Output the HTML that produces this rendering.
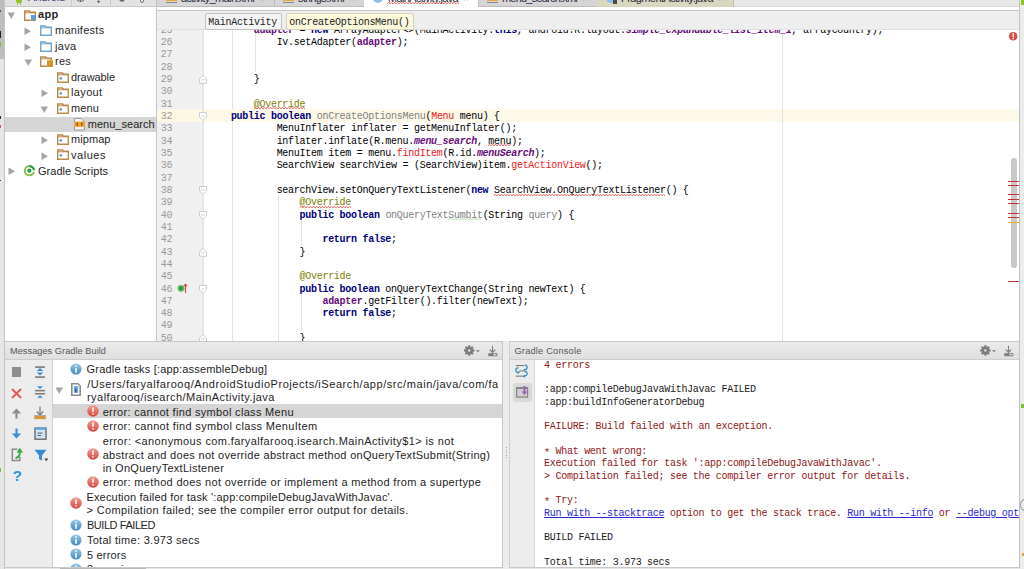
<!DOCTYPE html><html><head><meta charset="utf-8"><style>html,body{margin:0;padding:0;width:1024px;height:569px;overflow:hidden;position:relative}body{font-family:"Liberation Sans",sans-serif;-webkit-font-smoothing:antialiased}</style></head><body><div style="position:absolute;left:0px;top:0px;width:1024px;height:569px;background:#e8e8e8;"></div>
<div style="position:absolute;left:0px;top:0px;width:5px;height:59px;background:#bdbdbd;"></div>
<div style="position:absolute;left:0px;top:59px;width:5px;height:510px;background:#e6e6e6;"></div>
<div style="position:absolute;left:4px;top:0px;width:1px;height:569px;background:#c4c4c4;"></div>
<div style="position:absolute;left:0px;top:9.5px;width:1.2px;height:2px;background:#6a5030;"></div>
<div style="position:absolute;left:0px;top:31px;width:1.2px;height:6.5px;background:#202020;"></div>
<div style="position:absolute;left:0px;top:41.5px;width:1.2px;height:5.5px;background:#7cc040;"></div>
<div style="position:absolute;left:0px;top:116px;width:1.2px;height:3px;background:#303030;"></div>
<div style="position:absolute;left:0px;top:125px;width:1.2px;height:2.5px;background:#e05050;"></div>
<div style="position:absolute;left:0px;top:179.5px;width:1.2px;height:1.5px;background:#404040;"></div>
<div style="position:absolute;left:0px;top:468px;width:1.2px;height:4px;background:#7cc040;"></div>
<div style="position:absolute;left:5px;top:0px;width:151px;height:7px;background:#e2e2e2;"></div>
<div style="position:absolute;left:5px;top:6px;width:151px;height:1px;background:#c9c9c9;"></div>
<div style="position:absolute;left:5px;top:7px;width:151px;height:334px;background:#ffffff;"></div>
<div style="position:absolute;left:156px;top:0px;width:1px;height:341px;background:#c4c4c4;"></div>
<div style="position:absolute;left:16px;top:0;width:6px;height:3px;background:#8dc21f;border-radius:0 0 2px 2px"></div>
<div style="position:absolute;left:17px;top:3px;width:1px;height:2px;background:#8dc21f"></div><div style="position:absolute;left:20px;top:3px;width:1px;height:2px;background:#8dc21f"></div>
<div style="position:absolute;left:28px;top:-10.50px;font-family:'Liberation Sans', sans-serif;font-size:11px;font-weight:normal;font-style:normal;color:#3b3b6b;white-space:pre;line-height:15px;letter-spacing:-0.132px;">Android</div>
<div style="position:absolute;left:71px;top:0px;width:1px;height:6px;background:#c8c8c8;"></div>
<div style="position:absolute;left:76px;top:-7px;width:7px;height:7px;border:1.3px solid #6a6a6a;border-radius:50%"></div>
<div style="position:absolute;left:79.6px;top:0px;width:1px;height:2px;background:#6a6a6a;"></div>
<div style="position:absolute;left:97.6px;top:0px;width:1px;height:2.5px;background:#7a7a7a;"></div>
<svg style="position:absolute;left:95.5px;top:0px" width="6" height="4"><path d="M0.5 1 L2.6 3.5 L4.7 1 Z" fill="#7a7a7a"/></svg>
<div style="position:absolute;left:110px;top:0px;width:1px;height:4.5px;background:#c4c4c4;"></div>
<svg style="position:absolute;left:117px;top:-3px" width="10" height="6"><path d="M1 1 L9 1 L7 4 L5 5 L3 4 Z" fill="#6a6a6a"/></svg>
<div style="position:absolute;left:140px;top:-3px;width:2px;height:4px;border:1px solid #7a7a7a;border-radius:2px"></div>
<div style="position:absolute;left:5px;top:117px;width:151px;height:15px;background:#d5d5d5;"></div>
<svg style="position:absolute;left:7px;top:12px" width="9" height="8"><path d="M0.5 0.5 L8 0.5 L4.25 7 Z" fill="#a6a6a6"/></svg>
<svg style="position:absolute;left:24px;top:10px" width="14" height="12"><path d="M0.7 1 H5.5 L6.5 2.2 H11.3 V10.3 H0.7 Z" fill="none" stroke="#b98a4c" stroke-width="1.4"/><rect x="0.7" y="2.3" width="10.6" height="1" fill="#b98a4c"/></svg>
<div style="position:absolute;left:31px;top:15px;width:5px;height:5px;background:#5b9fd5;"></div>
<div style="position:absolute;left:38px;top:7.30px;font-family:'Liberation Sans', sans-serif;font-size:11px;font-weight:bold;font-style:normal;color:#1f1f1f;white-space:pre;line-height:15px;letter-spacing:0.312px;">app</div>
<svg style="position:absolute;left:24px;top:27px" width="8" height="9"><path d="M0.5 0.5 L7 4.25 L0.5 8 Z" fill="#a6a6a6"/></svg>
<svg style="position:absolute;left:40px;top:25px" width="14" height="12"><path d="M0.7 1 H5.5 L6.5 2.2 H11.3 V10.3 H0.7 Z" fill="none" stroke="#6ea5cf" stroke-width="1.4"/><rect x="0.7" y="2.3" width="10.6" height="1" fill="#6ea5cf"/></svg>
<div style="position:absolute;left:55px;top:22.93px;font-family:'Liberation Sans', sans-serif;font-size:11px;font-weight:normal;font-style:normal;color:#1f1f1f;white-space:pre;line-height:15px;letter-spacing:0.258px;">manifests</div>
<svg style="position:absolute;left:24px;top:43px" width="8" height="9"><path d="M0.5 0.5 L7 4.25 L0.5 8 Z" fill="#a6a6a6"/></svg>
<svg style="position:absolute;left:40px;top:41px" width="14" height="12"><path d="M0.7 1 H5.5 L6.5 2.2 H11.3 V10.3 H0.7 Z" fill="none" stroke="#6ea5cf" stroke-width="1.4"/><rect x="0.7" y="2.3" width="10.6" height="1" fill="#6ea5cf"/></svg>
<div style="position:absolute;left:55px;top:38.56px;font-family:'Liberation Sans', sans-serif;font-size:11px;font-weight:normal;font-style:normal;color:#1f1f1f;white-space:pre;line-height:15px;letter-spacing:0.328px;">java</div>
<svg style="position:absolute;left:23.5px;top:59px" width="9" height="8"><path d="M0.5 0.5 L8 0.5 L4.25 7 Z" fill="#a6a6a6"/></svg>
<svg style="position:absolute;left:40px;top:56px" width="14" height="12"><path d="M0.7 1 H5.5 L6.5 2.2 H11.3 V10.3 H0.7 Z" fill="none" stroke="#b98a4c" stroke-width="1.4"/><rect x="0.7" y="2.3" width="10.6" height="1" fill="#b98a4c"/></svg>
<svg style="position:absolute;left:47px;top:60px" width="6" height="7"><rect x="0" y="0" width="6" height="7" fill="#f0b030"/><rect x="0" y="1.6" width="6" height="0.9" fill="#a87828"/><rect x="0" y="3.6" width="6" height="0.9" fill="#a87828"/><rect x="0" y="5.6" width="6" height="0.9" fill="#a87828"/></svg>
<div style="position:absolute;left:55px;top:54.19px;font-family:'Liberation Sans', sans-serif;font-size:11px;font-weight:normal;font-style:normal;color:#1f1f1f;white-space:pre;line-height:15px;letter-spacing:0.240px;">res</div>
<svg style="position:absolute;left:57px;top:72px" width="14" height="12"><path d="M0.7 1 H5.5 L6.5 2.2 H11.3 V10.3 H0.7 Z" fill="none" stroke="#b98a4c" stroke-width="1.4"/><rect x="0.7" y="2.3" width="10.6" height="1" fill="#b98a4c"/><circle cx="3.8" cy="6.4" r="1.3" fill="#5b9bd0"/></svg>
<div style="position:absolute;left:71px;top:69.82px;font-family:'Liberation Sans', sans-serif;font-size:11px;font-weight:normal;font-style:normal;color:#1f1f1f;white-space:pre;line-height:15px;letter-spacing:-0.080px;">drawable</div>
<svg style="position:absolute;left:41px;top:89px" width="8" height="9"><path d="M0.5 0.5 L7 4.25 L0.5 8 Z" fill="#a6a6a6"/></svg>
<svg style="position:absolute;left:57px;top:87px" width="14" height="12"><path d="M0.7 1 H5.5 L6.5 2.2 H11.3 V10.3 H0.7 Z" fill="none" stroke="#b98a4c" stroke-width="1.4"/><rect x="0.7" y="2.3" width="10.6" height="1" fill="#b98a4c"/><circle cx="3.8" cy="6.4" r="1.3" fill="#5b9bd0"/></svg>
<div style="position:absolute;left:71px;top:85.45px;font-family:'Liberation Sans', sans-serif;font-size:11px;font-weight:normal;font-style:normal;color:#1f1f1f;white-space:pre;line-height:15px;letter-spacing:0.357px;">layout</div>
<svg style="position:absolute;left:40px;top:106px" width="9" height="8"><path d="M0.5 0.5 L8 0.5 L4.25 7 Z" fill="#a6a6a6"/></svg>
<svg style="position:absolute;left:57px;top:103px" width="14" height="12"><path d="M0.7 1 H5.5 L6.5 2.2 H11.3 V10.3 H0.7 Z" fill="none" stroke="#b98a4c" stroke-width="1.4"/><rect x="0.7" y="2.3" width="10.6" height="1" fill="#b98a4c"/><circle cx="3.8" cy="6.4" r="1.3" fill="#5b9bd0"/></svg>
<div style="position:absolute;left:71px;top:101.08px;font-family:'Liberation Sans', sans-serif;font-size:11px;font-weight:normal;font-style:normal;color:#1f1f1f;white-space:pre;line-height:15px;letter-spacing:0.117px;">menu</div>
<svg style="position:absolute;left:74px;top:118px" width="12" height="13"><path d="M0.5 0.5 H7 L10.5 4 V12 H0.5 Z" fill="#f4f4f4" stroke="#9a9a9a" stroke-width="1"/><rect x="0" y="3.5" width="11" height="5.5" fill="#eea43a"/><path d="M4 4.8 L2.5 6.2 L4 7.6 M7 4.8 L8.5 6.2 L7 7.6" stroke="#3a2a10" stroke-width="0.9" fill="none"/></svg>
<div style="position:absolute;left:87.7px;top:116.71px;font-family:'Liberation Sans', sans-serif;font-size:11px;font-weight:normal;font-style:normal;color:#1f1f1f;white-space:pre;line-height:15px;letter-spacing:0.031px;">menu_search</div>
<svg style="position:absolute;left:41px;top:136px" width="8" height="9"><path d="M0.5 0.5 L7 4.25 L0.5 8 Z" fill="#a6a6a6"/></svg>
<svg style="position:absolute;left:57px;top:134px" width="14" height="12"><path d="M0.7 1 H5.5 L6.5 2.2 H11.3 V10.3 H0.7 Z" fill="none" stroke="#b98a4c" stroke-width="1.4"/><rect x="0.7" y="2.3" width="10.6" height="1" fill="#b98a4c"/><circle cx="3.8" cy="6.4" r="1.3" fill="#5b9bd0"/></svg>
<div style="position:absolute;left:71px;top:132.34px;font-family:'Liberation Sans', sans-serif;font-size:11px;font-weight:normal;font-style:normal;color:#1f1f1f;white-space:pre;line-height:15px;letter-spacing:0.062px;">mipmap</div>
<svg style="position:absolute;left:41px;top:152px" width="8" height="9"><path d="M0.5 0.5 L7 4.25 L0.5 8 Z" fill="#a6a6a6"/></svg>
<svg style="position:absolute;left:57px;top:149px" width="14" height="12"><path d="M0.7 1 H5.5 L6.5 2.2 H11.3 V10.3 H0.7 Z" fill="none" stroke="#b98a4c" stroke-width="1.4"/><rect x="0.7" y="2.3" width="10.6" height="1" fill="#b98a4c"/><circle cx="3.8" cy="6.4" r="1.3" fill="#5b9bd0"/></svg>
<div style="position:absolute;left:71px;top:147.97px;font-family:'Liberation Sans', sans-serif;font-size:11px;font-weight:normal;font-style:normal;color:#1f1f1f;white-space:pre;line-height:15px;letter-spacing:0.534px;">values</div>
<svg style="position:absolute;left:8px;top:167px" width="8" height="9"><path d="M0.5 0.5 L7 4.25 L0.5 8 Z" fill="#a6a6a6"/></svg>
<svg style="position:absolute;left:23px;top:164px" width="13" height="13"><circle cx="6.4" cy="6.7" r="4.6" fill="none" stroke="#86c456" stroke-width="2"/><path d="M6.4 2.1 A4.6 4.6 0 0 1 11 6.7" fill="none" stroke="#22a04e" stroke-width="2.1"/><rect x="9.3" y="6.3" width="3.5" height="1.6" fill="#fff"/><circle cx="6.4" cy="6.7" r="2.1" fill="#22a04e"/></svg>
<div style="position:absolute;left:38px;top:163.60px;font-family:'Liberation Sans', sans-serif;font-size:11px;font-weight:normal;font-style:normal;color:#1f1f1f;white-space:pre;line-height:15px;letter-spacing:0.021px;">Gradle Scripts</div>
<div style="position:absolute;left:157px;top:11px;width:863px;height:330px;background:#ffffff;"></div>
<div style="position:absolute;left:157px;top:11px;width:45px;height:330px;background:#f0f0f0;"></div>
<div style="position:absolute;left:202px;top:11px;width:2px;height:330px;background:#e6e6e6;"></div>
<div style="position:absolute;left:1019px;top:0px;width:1px;height:569px;background:#c2c2c2;"></div>
<div style="position:absolute;left:1020px;top:0px;width:4px;height:569px;background:#ececec;"></div>
<div style="position:absolute;left:1020px;top:0px;width:2px;height:5px;background:#8dc21f;"></div>
<div style="position:absolute;left:157px;top:109.35px;width:45px;height:12.3px;background:#fdf8e4;"></div>
<div style="position:absolute;left:204px;top:109.35px;width:815px;height:12.3px;background:#fdf9e8;"></div>
<div style="position:absolute;left:782px;top:11px;width:1px;height:330px;background:#e2e2e2;"></div>
<div style="position:absolute;left:232px;top:10.750000000000002px;width:1px;height:98.575px;background:#e3e3e3;"></div>
<div style="position:absolute;left:232px;top:121.67499999999998px;width:1px;height:234.15px;background:#e3e3e3;"></div>
<div style="position:absolute;left:255px;top:10.750000000000002px;width:1px;height:61.60000000000001px;background:#e3e3e3;"></div>
<div style="position:absolute;left:278px;top:195.625px;width:1px;height:160.2px;background:#e3e3e3;"></div>
<div style="position:absolute;left:301px;top:220.275px;width:1px;height:24.62499999999997px;background:#e3e3e3;"></div>
<div style="position:absolute;left:301px;top:294.22499999999997px;width:1px;height:36.94999999999999px;background:#e3e3e3;"></div>
<svg style="position:absolute;left:199px;top:75.17px" width="8" height="9"><path d="M0.5 8.3 H7.5 V3.8 L4 0.5 L0.5 3.8 Z" fill="#ffffff" stroke="#cdcdcd" stroke-width="1"/><rect x="2.3" y="4.4" width="3.4" height="0.8" fill="#c0c0c0"/></svg>
<svg style="position:absolute;left:199px;top:112.15px" width="8" height="9"><path d="M0.5 0.5 H7.5 V5 L4 8.3 L0.5 5 Z" fill="#ffffff" stroke="#cdcdcd" stroke-width="1"/><rect x="2.3" y="3.6" width="3.4" height="0.8" fill="#c0c0c0"/></svg>
<svg style="position:absolute;left:199px;top:186.10px" width="8" height="9"><path d="M0.5 0.5 H7.5 V5 L4 8.3 L0.5 5 Z" fill="#ffffff" stroke="#cdcdcd" stroke-width="1"/><rect x="2.3" y="3.6" width="3.4" height="0.8" fill="#c0c0c0"/></svg>
<svg style="position:absolute;left:199px;top:210.75px" width="8" height="9"><path d="M0.5 0.5 H7.5 V5 L4 8.3 L0.5 5 Z" fill="#ffffff" stroke="#cdcdcd" stroke-width="1"/><rect x="2.3" y="3.6" width="3.4" height="0.8" fill="#c0c0c0"/></svg>
<svg style="position:absolute;left:199px;top:247.72px" width="8" height="9"><path d="M0.5 8.3 H7.5 V3.8 L4 0.5 L0.5 3.8 Z" fill="#ffffff" stroke="#cdcdcd" stroke-width="1"/><rect x="2.3" y="4.4" width="3.4" height="0.8" fill="#c0c0c0"/></svg>
<svg style="position:absolute;left:199px;top:284.70px" width="8" height="9"><path d="M0.5 0.5 H7.5 V5 L4 8.3 L0.5 5 Z" fill="#ffffff" stroke="#cdcdcd" stroke-width="1"/><rect x="2.3" y="3.6" width="3.4" height="0.8" fill="#c0c0c0"/></svg>
<svg style="position:absolute;left:199px;top:334.00px" width="8" height="9"><path d="M0.5 8.3 H7.5 V3.8 L4 0.5 L0.5 3.8 Z" fill="#ffffff" stroke="#cdcdcd" stroke-width="1"/><rect x="2.3" y="4.4" width="3.4" height="0.8" fill="#c0c0c0"/></svg>
<div style="position:absolute;left:160.8px;top:23.67px;font-family:'Liberation Mono', monospace;font-size:10px;font-weight:normal;font-style:normal;color:#999999;white-space:pre;line-height:14px;letter-spacing:-0.280px;">25</div>
<div style="position:absolute;left:160.8px;top:36.00px;font-family:'Liberation Mono', monospace;font-size:10px;font-weight:normal;font-style:normal;color:#999999;white-space:pre;line-height:14px;letter-spacing:-0.280px;">26</div>
<div style="position:absolute;left:160.8px;top:48.33px;font-family:'Liberation Mono', monospace;font-size:10px;font-weight:normal;font-style:normal;color:#999999;white-space:pre;line-height:14px;letter-spacing:-0.280px;">27</div>
<div style="position:absolute;left:160.8px;top:60.65px;font-family:'Liberation Mono', monospace;font-size:10px;font-weight:normal;font-style:normal;color:#999999;white-space:pre;line-height:14px;letter-spacing:-0.280px;">28</div>
<div style="position:absolute;left:160.8px;top:72.97px;font-family:'Liberation Mono', monospace;font-size:10px;font-weight:normal;font-style:normal;color:#999999;white-space:pre;line-height:14px;letter-spacing:-0.280px;">29</div>
<div style="position:absolute;left:160.8px;top:85.30px;font-family:'Liberation Mono', monospace;font-size:10px;font-weight:normal;font-style:normal;color:#999999;white-space:pre;line-height:14px;letter-spacing:-0.280px;">30</div>
<div style="position:absolute;left:160.8px;top:97.62px;font-family:'Liberation Mono', monospace;font-size:10px;font-weight:normal;font-style:normal;color:#999999;white-space:pre;line-height:14px;letter-spacing:-0.280px;">31</div>
<div style="position:absolute;left:160.8px;top:109.95px;font-family:'Liberation Mono', monospace;font-size:10px;font-weight:normal;font-style:normal;color:#999999;white-space:pre;line-height:14px;letter-spacing:-0.280px;">32</div>
<div style="position:absolute;left:160.8px;top:122.27px;font-family:'Liberation Mono', monospace;font-size:10px;font-weight:normal;font-style:normal;color:#999999;white-space:pre;line-height:14px;letter-spacing:-0.280px;">33</div>
<div style="position:absolute;left:160.8px;top:134.60px;font-family:'Liberation Mono', monospace;font-size:10px;font-weight:normal;font-style:normal;color:#999999;white-space:pre;line-height:14px;letter-spacing:-0.280px;">34</div>
<div style="position:absolute;left:160.8px;top:146.93px;font-family:'Liberation Mono', monospace;font-size:10px;font-weight:normal;font-style:normal;color:#999999;white-space:pre;line-height:14px;letter-spacing:-0.280px;">35</div>
<div style="position:absolute;left:160.8px;top:159.25px;font-family:'Liberation Mono', monospace;font-size:10px;font-weight:normal;font-style:normal;color:#999999;white-space:pre;line-height:14px;letter-spacing:-0.280px;">36</div>
<div style="position:absolute;left:160.8px;top:171.57px;font-family:'Liberation Mono', monospace;font-size:10px;font-weight:normal;font-style:normal;color:#999999;white-space:pre;line-height:14px;letter-spacing:-0.280px;">37</div>
<div style="position:absolute;left:160.8px;top:183.90px;font-family:'Liberation Mono', monospace;font-size:10px;font-weight:normal;font-style:normal;color:#999999;white-space:pre;line-height:14px;letter-spacing:-0.280px;">38</div>
<div style="position:absolute;left:160.8px;top:196.22px;font-family:'Liberation Mono', monospace;font-size:10px;font-weight:normal;font-style:normal;color:#999999;white-space:pre;line-height:14px;letter-spacing:-0.280px;">39</div>
<div style="position:absolute;left:160.8px;top:208.55px;font-family:'Liberation Mono', monospace;font-size:10px;font-weight:normal;font-style:normal;color:#999999;white-space:pre;line-height:14px;letter-spacing:-0.280px;">40</div>
<div style="position:absolute;left:160.8px;top:220.88px;font-family:'Liberation Mono', monospace;font-size:10px;font-weight:normal;font-style:normal;color:#999999;white-space:pre;line-height:14px;letter-spacing:-0.280px;">41</div>
<div style="position:absolute;left:160.8px;top:233.20px;font-family:'Liberation Mono', monospace;font-size:10px;font-weight:normal;font-style:normal;color:#999999;white-space:pre;line-height:14px;letter-spacing:-0.280px;">42</div>
<div style="position:absolute;left:160.8px;top:245.52px;font-family:'Liberation Mono', monospace;font-size:10px;font-weight:normal;font-style:normal;color:#999999;white-space:pre;line-height:14px;letter-spacing:-0.280px;">43</div>
<div style="position:absolute;left:160.8px;top:257.85px;font-family:'Liberation Mono', monospace;font-size:10px;font-weight:normal;font-style:normal;color:#999999;white-space:pre;line-height:14px;letter-spacing:-0.280px;">44</div>
<div style="position:absolute;left:160.8px;top:270.17px;font-family:'Liberation Mono', monospace;font-size:10px;font-weight:normal;font-style:normal;color:#999999;white-space:pre;line-height:14px;letter-spacing:-0.280px;">45</div>
<div style="position:absolute;left:160.8px;top:282.50px;font-family:'Liberation Mono', monospace;font-size:10px;font-weight:normal;font-style:normal;color:#999999;white-space:pre;line-height:14px;letter-spacing:-0.280px;">46</div>
<div style="position:absolute;left:160.8px;top:294.82px;font-family:'Liberation Mono', monospace;font-size:10px;font-weight:normal;font-style:normal;color:#999999;white-space:pre;line-height:14px;letter-spacing:-0.280px;">47</div>
<div style="position:absolute;left:160.8px;top:307.15px;font-family:'Liberation Mono', monospace;font-size:10px;font-weight:normal;font-style:normal;color:#999999;white-space:pre;line-height:14px;letter-spacing:-0.280px;">48</div>
<div style="position:absolute;left:160.8px;top:319.47px;font-family:'Liberation Mono', monospace;font-size:10px;font-weight:normal;font-style:normal;color:#999999;white-space:pre;line-height:14px;letter-spacing:-0.280px;">49</div>
<div style="position:absolute;left:160.8px;top:331.80px;font-family:'Liberation Mono', monospace;font-size:10px;font-weight:normal;font-style:normal;color:#999999;white-space:pre;line-height:14px;letter-spacing:-0.280px;">50</div>
<svg style="position:absolute;left:176px;top:281.50px" width="14" height="12"><circle cx="5" cy="6.3" r="3.4" fill="#4fbf55"/><rect x="4.2" y="5" width="1.6" height="2.6" fill="#2a5a30"/><path d="M9.5 11 V3.5" stroke="#d9463e" stroke-width="1.2"/><path d="M7.3 4.2 L9.5 1.2 L11.7 4.2 Z" fill="#d9463e"/></svg>
<div style="position:absolute;left:253.7688px;top:23.67px;font-family:'Liberation Mono', monospace;font-size:10px;font-weight:normal;font-style:normal;color:#000000;white-space:pre;line-height:14px;letter-spacing:-0.280px;"><span style="color:#660e7a;font-weight:bold">adapter</span> = <span style="color:#000080;font-weight:bold">new</span> ArrayAdapter&lt;&gt;(MainActivity.<span style="color:#000080;font-weight:bold">this</span>, android.R.layout.<span style="color:#660e7a;font-weight:bold;font-style:italic">simple_expandable_list_item_1</span>, arrayCountry);</div>
<div style="position:absolute;left:276.65319999999997px;top:36.00px;font-family:'Liberation Mono', monospace;font-size:10px;font-weight:normal;font-style:normal;color:#000000;white-space:pre;line-height:14px;letter-spacing:-0.280px;">Iv.setAdapter(<span style="color:#660e7a;font-weight:bold">adapter</span>);</div>
<div style="position:absolute;left:253.7688px;top:72.97px;font-family:'Liberation Mono', monospace;font-size:10px;font-weight:normal;font-style:normal;color:#000000;white-space:pre;line-height:14px;letter-spacing:-0.280px;">}</div>
<div style="position:absolute;left:253.7688px;top:97.62px;font-family:'Liberation Mono', monospace;font-size:10px;font-weight:normal;font-style:normal;color:#000000;white-space:pre;line-height:14px;letter-spacing:-0.280px;"><span style="color:#808000">@Override</span></div>
<div style="position:absolute;left:230.8844px;top:109.95px;font-family:'Liberation Mono', monospace;font-size:10px;font-weight:normal;font-style:normal;color:#000000;white-space:pre;line-height:14px;letter-spacing:-0.280px;"><span style="color:#000080;font-weight:bold">public</span> <span style="color:#000080;font-weight:bold">boolean</span> <span style="color:#808080">onCreateOptionsMenu</span>(<span style="color:#f01818">Menu</span> menu) {</div>
<div style="position:absolute;left:276.65319999999997px;top:122.27px;font-family:'Liberation Mono', monospace;font-size:10px;font-weight:normal;font-style:normal;color:#000000;white-space:pre;line-height:14px;letter-spacing:-0.280px;">MenuInflater inflater = getMenuInflater();</div>
<div style="position:absolute;left:276.65319999999997px;top:134.60px;font-family:'Liberation Mono', monospace;font-size:10px;font-weight:normal;font-style:normal;color:#000000;white-space:pre;line-height:14px;letter-spacing:-0.280px;">inflater.inflate(R.menu.<span style="color:#660e7a;font-weight:bold;font-style:italic">menu_search</span>, menu);</div>
<div style="position:absolute;left:276.65319999999997px;top:146.93px;font-family:'Liberation Mono', monospace;font-size:10px;font-weight:normal;font-style:normal;color:#000000;white-space:pre;line-height:14px;letter-spacing:-0.280px;">MenuItem item = menu.<span style="color:#f01818">findItem</span>(R.id.<span style="color:#660e7a;font-weight:bold;font-style:italic">menuSearch</span>);</div>
<div style="position:absolute;left:276.65319999999997px;top:159.25px;font-family:'Liberation Mono', monospace;font-size:10px;font-weight:normal;font-style:normal;color:#000000;white-space:pre;line-height:14px;letter-spacing:-0.280px;">SearchView searchView = (SearchView)item.<span style="color:#f01818">getActionView</span>();</div>
<div style="position:absolute;left:276.65319999999997px;top:183.90px;font-family:'Liberation Mono', monospace;font-size:10px;font-weight:normal;font-style:normal;color:#000000;white-space:pre;line-height:14px;letter-spacing:-0.280px;">searchView.setOnQueryTextListener(<span style="color:#000080;font-weight:bold">new</span> SearchView.OnQueryTextListener() {</div>
<div style="position:absolute;left:299.5376px;top:196.22px;font-family:'Liberation Mono', monospace;font-size:10px;font-weight:normal;font-style:normal;color:#000000;white-space:pre;line-height:14px;letter-spacing:-0.280px;"><span style="color:#808000">@Override</span></div>
<div style="position:absolute;left:299.5376px;top:208.55px;font-family:'Liberation Mono', monospace;font-size:10px;font-weight:normal;font-style:normal;color:#000000;white-space:pre;line-height:14px;letter-spacing:-0.280px;"><span style="color:#000080;font-weight:bold">public</span> <span style="color:#000080;font-weight:bold">boolean</span> <span style="color:#808080">onQueryText</span><span style="color:#808080">Sumbit</span>(String <span style="color:#808080">query</span>) {</div>
<div style="position:absolute;left:322.422px;top:233.20px;font-family:'Liberation Mono', monospace;font-size:10px;font-weight:normal;font-style:normal;color:#000000;white-space:pre;line-height:14px;letter-spacing:-0.280px;"><span style="color:#000080;font-weight:bold">return</span> <span style="color:#000080;font-weight:bold">false</span>;</div>
<div style="position:absolute;left:299.5376px;top:245.52px;font-family:'Liberation Mono', monospace;font-size:10px;font-weight:normal;font-style:normal;color:#000000;white-space:pre;line-height:14px;letter-spacing:-0.280px;">}</div>
<div style="position:absolute;left:299.5376px;top:270.17px;font-family:'Liberation Mono', monospace;font-size:10px;font-weight:normal;font-style:normal;color:#000000;white-space:pre;line-height:14px;letter-spacing:-0.280px;"><span style="color:#808000">@Override</span></div>
<div style="position:absolute;left:299.5376px;top:282.50px;font-family:'Liberation Mono', monospace;font-size:10px;font-weight:normal;font-style:normal;color:#000000;white-space:pre;line-height:14px;letter-spacing:-0.280px;"><span style="color:#000080;font-weight:bold">public</span> <span style="color:#000080;font-weight:bold">boolean</span> onQueryTextChange(String newText) {</div>
<div style="position:absolute;left:322.422px;top:294.82px;font-family:'Liberation Mono', monospace;font-size:10px;font-weight:normal;font-style:normal;color:#000000;white-space:pre;line-height:14px;letter-spacing:-0.280px;"><span style="color:#660e7a;font-weight:bold">adapter</span>.getFilter().filter(newText);</div>
<div style="position:absolute;left:322.422px;top:307.15px;font-family:'Liberation Mono', monospace;font-size:10px;font-weight:normal;font-style:normal;color:#000000;white-space:pre;line-height:14px;letter-spacing:-0.280px;"><span style="color:#000080;font-weight:bold">return</span> <span style="color:#000080;font-weight:bold">false</span>;</div>
<div style="position:absolute;left:299.5376px;top:331.80px;font-family:'Liberation Mono', monospace;font-size:10px;font-weight:normal;font-style:normal;color:#000000;white-space:pre;line-height:14px;letter-spacing:-0.280px;">}</div>
<svg style="position:absolute;left:253.77px;top:107.33px;overflow:visible" width="51.5" height="2.2"><polyline points="0.00,1.70 1.50,0.50 3.00,1.70 4.50,0.50 6.00,1.70 7.50,0.50 9.00,1.70 10.50,0.50 12.00,1.70 13.50,0.50 15.00,1.70 16.50,0.50 18.00,1.70 19.50,0.50 21.00,1.70 22.50,0.50 24.00,1.70 25.50,0.50 27.00,1.70 28.50,0.50 30.00,1.70 31.50,0.50 33.00,1.70 34.50,0.50 36.00,1.70 37.50,0.50 39.00,1.70 40.50,0.50 42.00,1.70 43.50,0.50 45.00,1.70 46.50,0.50 48.00,1.70 49.50,0.50 51.00,1.70" fill="none" stroke="#f05050" stroke-width="0.9"/></svg>
<svg style="position:absolute;left:299.54px;top:205.93px;overflow:visible" width="51.5" height="2.2"><polyline points="0.00,1.70 1.50,0.50 3.00,1.70 4.50,0.50 6.00,1.70 7.50,0.50 9.00,1.70 10.50,0.50 12.00,1.70 13.50,0.50 15.00,1.70 16.50,0.50 18.00,1.70 19.50,0.50 21.00,1.70 22.50,0.50 24.00,1.70 25.50,0.50 27.00,1.70 28.50,0.50 30.00,1.70 31.50,0.50 33.00,1.70 34.50,0.50 36.00,1.70 37.50,0.50 39.00,1.70 40.50,0.50 42.00,1.70 43.50,0.50 45.00,1.70 46.50,0.50 48.00,1.70 49.50,0.50 51.00,1.70" fill="none" stroke="#f05050" stroke-width="0.9"/></svg>
<svg style="position:absolute;left:488.33px;top:144.30px;overflow:visible" width="22.9" height="2.2"><polyline points="0.00,1.70 1.50,0.50 3.00,1.70 4.50,0.50 6.00,1.70 7.50,0.50 9.00,1.70 10.50,0.50 12.00,1.70 13.50,0.50 15.00,1.70 16.50,0.50 18.00,1.70 19.50,0.50 21.00,1.70 22.50,0.50" fill="none" stroke="#f05050" stroke-width="0.9"/></svg>
<svg style="position:absolute;left:494.06px;top:193.60px;overflow:visible" width="171.6" height="2.2"><polyline points="0.00,1.70 1.50,0.50 3.00,1.70 4.50,0.50 6.00,1.70 7.50,0.50 9.00,1.70 10.50,0.50 12.00,1.70 13.50,0.50 15.00,1.70 16.50,0.50 18.00,1.70 19.50,0.50 21.00,1.70 22.50,0.50 24.00,1.70 25.50,0.50 27.00,1.70 28.50,0.50 30.00,1.70 31.50,0.50 33.00,1.70 34.50,0.50 36.00,1.70 37.50,0.50 39.00,1.70 40.50,0.50 42.00,1.70 43.50,0.50 45.00,1.70 46.50,0.50 48.00,1.70 49.50,0.50 51.00,1.70 52.50,0.50 54.00,1.70 55.50,0.50 57.00,1.70 58.50,0.50 60.00,1.70 61.50,0.50 63.00,1.70 64.50,0.50 66.00,1.70 67.50,0.50 69.00,1.70 70.50,0.50 72.00,1.70 73.50,0.50 75.00,1.70 76.50,0.50 78.00,1.70 79.50,0.50 81.00,1.70 82.50,0.50 84.00,1.70 85.50,0.50 87.00,1.70 88.50,0.50 90.00,1.70 91.50,0.50 93.00,1.70 94.50,0.50 96.00,1.70 97.50,0.50 99.00,1.70 100.50,0.50 102.00,1.70 103.50,0.50 105.00,1.70 106.50,0.50 108.00,1.70 109.50,0.50 111.00,1.70 112.50,0.50 114.00,1.70 115.50,0.50 117.00,1.70 118.50,0.50 120.00,1.70 121.50,0.50 123.00,1.70 124.50,0.50 126.00,1.70 127.50,0.50 129.00,1.70 130.50,0.50 132.00,1.70 133.50,0.50 135.00,1.70 136.50,0.50 138.00,1.70 139.50,0.50 141.00,1.70 142.50,0.50 144.00,1.70 145.50,0.50 147.00,1.70 148.50,0.50 150.00,1.70 151.50,0.50 153.00,1.70 154.50,0.50 156.00,1.70 157.50,0.50 159.00,1.70 160.50,0.50 162.00,1.70 163.50,0.50 165.00,1.70 166.50,0.50 168.00,1.70 169.50,0.50 171.00,1.70" fill="none" stroke="#f05050" stroke-width="0.9"/></svg>
<svg style="position:absolute;left:448.29px;top:218.25px;overflow:visible" width="34.3" height="2.2"><polyline points="0.00,1.70 1.50,0.50 3.00,1.70 4.50,0.50 6.00,1.70 7.50,0.50 9.00,1.70 10.50,0.50 12.00,1.70 13.50,0.50 15.00,1.70 16.50,0.50 18.00,1.70 19.50,0.50 21.00,1.70 22.50,0.50 24.00,1.70 25.50,0.50 27.00,1.70 28.50,0.50 30.00,1.70 31.50,0.50 33.00,1.70" fill="none" stroke="#a8d8a8" stroke-width="0.9"/></svg>
<div style="position:absolute;left:1011px;top:158px;width:6px;height:110px;border-radius:3px;background:#c9c9c9"></div>
<div style="position:absolute;left:1008px;top:180.70000000000002px;width:11px;height:1.2px;background:#c8313a;"></div>
<div style="position:absolute;left:1008px;top:184.70000000000002px;width:11px;height:1.2px;background:#c8313a;"></div>
<div style="position:absolute;left:1008px;top:193.70000000000002px;width:11px;height:1.2px;background:#c8313a;"></div>
<div style="position:absolute;left:1008px;top:198.70000000000002px;width:11px;height:1.2px;background:#c8313a;"></div>
<div style="position:absolute;left:1008px;top:203.0px;width:11px;height:1.2px;background:#c8313a;"></div>
<div style="position:absolute;left:1008px;top:212.8px;width:11px;height:1.2px;background:#c8313a;"></div>
<div style="position:absolute;left:1008px;top:216.70000000000002px;width:11px;height:1.2px;background:#c8313a;"></div>
<div style="position:absolute;left:1008px;top:280.9px;width:11px;height:1.2px;background:#c8313a;"></div>
<div style="position:absolute;left:1008px;top:221.8px;width:11px;height:1.2px;background:#e8b820;"></div>
<svg style="position:absolute;left:1008px;top:31px" width="11" height="11"><circle cx="5.2" cy="5.2" r="4.3" fill="#d2504f"/><rect x="4.5" y="2.2" width="1.4" height="3.8" fill="#fff"/><rect x="4.5" y="6.8" width="1.4" height="1.3" fill="#fff"/></svg>
<div style="position:absolute;left:157px;top:7px;width:863px;height:3px;background:#ffffff;"></div>
<div style="position:absolute;left:157px;top:10px;width:863px;height:1px;background:#c6c6c6;"></div>
<div style="position:absolute;left:157px;top:11px;width:863px;height:19px;background:#eeeeee;"></div>
<div style="position:absolute;left:157px;top:29px;width:863px;height:1px;background:#e0e0e0;"></div>
<div style="position:absolute;left:204.5px;top:12.5px;width:75.5px;height:15px;background:#f5f5f5;border:1px solid #c2c2c2;border-radius:2px;box-sizing:content-box"></div>
<div style="position:absolute;left:285.5px;top:12.5px;width:126px;height:15px;background:#fcf8dc;border:1px solid #d6d3bd;border-radius:2px"></div>
<div style="position:absolute;left:208.3px;top:15.70px;font-family:'Liberation Mono', monospace;font-size:10px;font-weight:normal;font-style:normal;color:#222222;white-space:pre;line-height:14px;letter-spacing:-0.280px;">MainActivity</div>
<div style="position:absolute;left:289.3px;top:15.70px;font-family:'Liberation Mono', monospace;font-size:10px;font-weight:normal;font-style:normal;color:#222222;white-space:pre;line-height:14px;letter-spacing:-0.280px;">onCreateOptionsMenu()</div>
<div style="position:absolute;left:157px;top:0px;width:863px;height:7px;background:#d5d5d5;"></div>
<div style="position:absolute;left:157px;top:6px;width:863px;height:1px;background:#bdbdbd;"></div>
<div style="position:absolute;left:274px;top:0px;width:1px;height:6.5px;background:#bcbcbc;"></div>
<div style="position:absolute;left:166px;top:0px;width:10.5px;height:1.2px;background:#eea43a;"></div>
<div style="position:absolute;left:166px;top:1.5px;width:10.5px;height:1px;background:#8a8a8a;"></div>
<div style="position:absolute;left:181px;top:-9.50px;font-family:'Liberation Sans', sans-serif;font-size:11px;font-weight:normal;font-style:normal;color:#2a2a40;white-space:pre;line-height:15px;letter-spacing:-0.632px;">activity_main.xml</div>
<div style="position:absolute;left:259px;top:-8.50px;font-family:'Liberation Sans', sans-serif;font-size:10px;font-weight:normal;font-style:normal;color:#9a9a9a;white-space:pre;line-height:14px;letter-spacing:0.000px;">×</div>
<div style="position:absolute;left:364px;top:0px;width:1px;height:6.5px;background:#bcbcbc;"></div>
<div style="position:absolute;left:283px;top:0px;width:10.5px;height:1.2px;background:#eea43a;"></div>
<div style="position:absolute;left:283px;top:1.5px;width:10.5px;height:1px;background:#8a8a8a;"></div>
<div style="position:absolute;left:298px;top:-9.50px;font-family:'Liberation Sans', sans-serif;font-size:11px;font-weight:normal;font-style:normal;color:#2a2a40;white-space:pre;line-height:15px;letter-spacing:-0.597px;">strings.xml</div>
<div style="position:absolute;left:349px;top:-8.50px;font-family:'Liberation Sans', sans-serif;font-size:10px;font-weight:normal;font-style:normal;color:#9a9a9a;white-space:pre;line-height:14px;letter-spacing:0.000px;">×</div>
<div style="position:absolute;left:364px;top:0px;width:114px;height:7px;background:#ffffff;"></div>
<div style="position:absolute;left:478px;top:0px;width:1px;height:6.5px;background:#bcbcbc;"></div>
<div style="position:absolute;left:373px;top:-7px;width:10px;height:10px;border-radius:50%;background:#8cc0ea"></div>
<div style="position:absolute;left:388px;top:-9.50px;font-family:'Liberation Sans', sans-serif;font-size:11px;font-weight:normal;font-style:normal;color:#2a2a40;white-space:pre;line-height:15px;letter-spacing:-0.653px;">MainActivity.java</div>
<div style="position:absolute;left:463px;top:-8.50px;font-family:'Liberation Sans', sans-serif;font-size:10px;font-weight:normal;font-style:normal;color:#9a9a9a;white-space:pre;line-height:14px;letter-spacing:0.000px;">×</div>
<svg style="position:absolute;left:387.00px;top:1.70px;overflow:visible" width="73.0" height="2.2"><polyline points="0.00,1.70 1.50,0.50 3.00,1.70 4.50,0.50 6.00,1.70 7.50,0.50 9.00,1.70 10.50,0.50 12.00,1.70 13.50,0.50 15.00,1.70 16.50,0.50 18.00,1.70 19.50,0.50 21.00,1.70 22.50,0.50 24.00,1.70 25.50,0.50 27.00,1.70 28.50,0.50 30.00,1.70 31.50,0.50 33.00,1.70 34.50,0.50 36.00,1.70 37.50,0.50 39.00,1.70 40.50,0.50 42.00,1.70 43.50,0.50 45.00,1.70 46.50,0.50 48.00,1.70 49.50,0.50 51.00,1.70 52.50,0.50 54.00,1.70 55.50,0.50 57.00,1.70 58.50,0.50 60.00,1.70 61.50,0.50 63.00,1.70 64.50,0.50 66.00,1.70 67.50,0.50 69.00,1.70 70.50,0.50 72.00,1.70" fill="none" stroke="#f05050" stroke-width="0.9"/></svg>
<div style="position:absolute;left:597px;top:0px;width:1px;height:6.5px;background:#bcbcbc;"></div>
<div style="position:absolute;left:487px;top:0px;width:10.5px;height:1.2px;background:#eea43a;"></div>
<div style="position:absolute;left:487px;top:1.5px;width:10.5px;height:1px;background:#8a8a8a;"></div>
<div style="position:absolute;left:502px;top:-9.50px;font-family:'Liberation Sans', sans-serif;font-size:11px;font-weight:normal;font-style:normal;color:#2a2a40;white-space:pre;line-height:15px;letter-spacing:-0.789px;">menu_search.xml</div>
<div style="position:absolute;left:582px;top:-8.50px;font-family:'Liberation Sans', sans-serif;font-size:10px;font-weight:normal;font-style:normal;color:#9a9a9a;white-space:pre;line-height:14px;letter-spacing:0.000px;">×</div>
<div style="position:absolute;left:597px;top:0px;width:136px;height:7px;background:#d9d7c0;"></div>
<div style="position:absolute;left:733px;top:0px;width:1px;height:6.5px;background:#bcbcbc;"></div>
<div style="position:absolute;left:606px;top:-7px;width:10px;height:10px;border-radius:50%;background:#8cc0ea"></div>
<div style="position:absolute;left:613px;top:0px;width:4px;height:4px;background:#4a4a4a;"></div>
<div style="position:absolute;left:621px;top:-9.50px;font-family:'Liberation Sans', sans-serif;font-size:11px;font-weight:normal;font-style:normal;color:#2a2a40;white-space:pre;line-height:15px;letter-spacing:-0.587px;">FragmentActivity.java</div>
<div style="position:absolute;left:718px;top:-8.50px;font-family:'Liberation Sans', sans-serif;font-size:10px;font-weight:normal;font-style:normal;color:#9a9a9a;white-space:pre;line-height:14px;letter-spacing:0.000px;">×</div>
<div style="position:absolute;left:734px;top:0px;width:285px;height:6px;background:#e8e8e8;"></div>
<div style="position:absolute;left:734px;top:6px;width:285px;height:1px;background:#dadada;"></div>
<div style="position:absolute;left:1019px;top:0px;width:1px;height:341px;background:#c2c2c2;"></div>
<div style="position:absolute;left:1020px;top:0px;width:4px;height:341px;background:#ececec;"></div>
<div style="position:absolute;left:1020.5px;top:0px;width:3.5px;height:4.5px;background:#8dc21f;"></div>
<div style="position:absolute;left:5px;top:341px;width:1015px;height:228px;background:#ececec;"></div>
<div style="position:absolute;left:5px;top:341px;width:498px;height:1px;background:#c8c8c8;"></div>
<div style="position:absolute;left:5px;top:342px;width:497px;height:17.5px;background:linear-gradient(#eaeaea,#dfdfdf);"></div>
<div style="position:absolute;left:5px;top:359px;width:498px;height:1px;background:#cdcdcd;"></div>
<div style="position:absolute;left:502.2px;top:341px;width:1.2px;height:226px;background:#c6c6c6;"></div>
<div style="position:absolute;left:10px;top:344.90px;font-family:'Liberation Sans', sans-serif;font-size:9.2px;font-weight:normal;font-style:normal;color:#555555;white-space:pre;line-height:13px;letter-spacing:0.048px;">Messages Gradle Build</div>
<svg style="position:absolute;left:0;top:0;overflow:visible" width="1" height="1"><rect x="468.05" y="345.30" width="2.3" height="3" fill="#7b7b7b" transform="rotate(0 469.2 350.5)"/><rect x="468.05" y="345.30" width="2.3" height="3" fill="#7b7b7b" transform="rotate(45 469.2 350.5)"/><rect x="468.05" y="345.30" width="2.3" height="3" fill="#7b7b7b" transform="rotate(90 469.2 350.5)"/><rect x="468.05" y="345.30" width="2.3" height="3" fill="#7b7b7b" transform="rotate(135 469.2 350.5)"/><rect x="468.05" y="345.30" width="2.3" height="3" fill="#7b7b7b" transform="rotate(180 469.2 350.5)"/><rect x="468.05" y="345.30" width="2.3" height="3" fill="#7b7b7b" transform="rotate(225 469.2 350.5)"/><rect x="468.05" y="345.30" width="2.3" height="3" fill="#7b7b7b" transform="rotate(270 469.2 350.5)"/><rect x="468.05" y="345.30" width="2.3" height="3" fill="#7b7b7b" transform="rotate(315 469.2 350.5)"/><circle cx="469.2" cy="350.5" r="3.6" fill="#7b7b7b"/><circle cx="469.2" cy="350.5" r="1.2" fill="#e8e8e8"/><path d="M475.8 350.3 h4 l-2 2 z" fill="#7b7b7b"/></svg>
<svg style="position:absolute;left:487.5px;top:345px" width="10" height="12"><path d="M4.5 0.8 V6.8" stroke="#7b7b7b" stroke-width="1"/><path d="M1.8 4.6 L4.5 7.3 L7.2 4.6" stroke="#7b7b7b" stroke-width="1.2" fill="none"/><rect x="0.3" y="8.2" width="9" height="3" fill="#7b7b7b"/><rect x="5.3" y="9" width="3" height="1.3" fill="#d8d8d8"/></svg>
<div style="position:absolute;left:5px;top:360px;width:47.5px;height:207px;background:#ececec;"></div>
<div style="position:absolute;left:52px;top:360px;width:1px;height:207px;background:#d0d0d0;"></div>
<div style="position:absolute;left:53px;top:360px;width:449.2px;height:207px;background:#ffffff;"></div>
<div style="position:absolute;left:53px;top:404.1px;width:449.2px;height:14.4px;background:#d5d5d5;"></div>
<div style="position:absolute;left:5px;top:566.8px;width:498px;height:1px;background:#c8c8c8;"></div>
<div style="position:absolute;left:5px;top:567.8px;width:498px;height:2px;background:#e6e6e6;"></div>
<div style="position:absolute;left:60px;top:567.5px;width:86px;height:2px;background:#b8b8b8;"></div>
<div style="position:absolute;left:11.6px;top:367.2px;width:9.4px;height:9.4px;background:#8d8d8d;"></div>
<svg style="position:absolute;left:11px;top:387.5px" width="11" height="11"><path d="M1 1 L10 10 M10 1 L1 10" stroke="#e05a55" stroke-width="1.9"/></svg>
<svg style="position:absolute;left:11px;top:407.5px" width="11" height="11"><path d="M5.5 10.5 V4" stroke="#8e8e8e" stroke-width="2.2"/><path d="M0.8 5.6 L5.5 0.6 L10.2 5.6 Z" fill="#8e8e8e"/></svg>
<svg style="position:absolute;left:11px;top:428.3px" width="11" height="11"><path d="M5.5 0.5 V7" stroke="#3d8fd6" stroke-width="2.2"/><path d="M0.8 5.4 L5.5 10.4 L10.2 5.4 Z" fill="#3d8fd6"/></svg>
<svg style="position:absolute;left:11px;top:446.5px" width="13" height="15"><path d="M6.5 2.2 H1.3 V13.6 H8.8 V10" stroke="#8a8a8a" stroke-width="1.5" fill="none"/><path d="M4.5 11 Q9 10.5 8.8 5" stroke="#39a845" stroke-width="1.9" fill="none"/><path d="M5.6 5.6 L8.8 0.8 L12 5.6 Z" fill="#39a845"/></svg>
<div style="position:absolute;left:12.4px;top:465.20px;font-family:'Liberation Sans', sans-serif;font-size:15.5px;font-weight:bold;font-style:normal;color:#2596e6;white-space:pre;line-height:22px;letter-spacing:0.000px;">?</div>
<svg style="position:absolute;left:34px;top:365px" width="12" height="14"><rect x="1" y="1.3" width="10" height="1.6" fill="#7a7a7a"/><path d="M2.6 6 L6 2.9 L9.4 6 Z" fill="#3a8fd0"/><path d="M2.6 7.6 L6 10.5 L9.4 7.6 Z" fill="#3a8fd0"/><rect x="1" y="11.3" width="10" height="1.6" fill="#7a7a7a"/></svg>
<svg style="position:absolute;left:34px;top:385px" width="12" height="14"><path d="M3 1.3 L6 3.9 L9 1.3 Z" fill="#3a8fd0"/><rect x="1" y="4.9" width="10" height="1.5" fill="#7a7a7a"/><rect x="1" y="8" width="10" height="1.5" fill="#7a7a7a"/><path d="M3 12.8 L6 10.2 L9 12.8 Z" fill="#3a8fd0"/></svg>
<svg style="position:absolute;left:34px;top:406px" width="12" height="14"><path d="M6 0.5 V8" stroke="#7d7d7d" stroke-width="1.3"/><path d="M2.8 5.6 L6 9 L9.2 5.6" stroke="#7d7d7d" stroke-width="1.4" fill="none"/><rect x="0.3" y="9.5" width="11.5" height="3.6" fill="#d7963c"/><rect x="0.3" y="9" width="11.5" height="0.8" fill="#a0a0a0"/></svg>
<svg style="position:absolute;left:34px;top:427px" width="13" height="13"><rect x="1" y="1.2" width="11" height="11" fill="#cfe6f7" stroke="#6a6a6a" stroke-width="1.4"/><rect x="0.5" y="0.5" width="12" height="2.2" fill="#5c9fd6"/><rect x="3.5" y="5.6" width="5" height="1" fill="#555"/><rect x="3.5" y="8" width="3.5" height="1" fill="#555"/></svg>
<svg style="position:absolute;left:33.5px;top:448.5px" width="15" height="14"><path d="M0.5 0.8 H12.5 L8 6.5 V11.8 L5 10 V6.5 Z" fill="#3a8cd0"/><path d="M10.3 9.6 H14.3 L12.3 12.2 Z" fill="#444"/></svg>
<svg style="position:absolute;left:70px;top:362.5px" width="12" height="12"><defs><linearGradient id="ig" x1="0" y1="0" x2="0" y2="1"><stop offset="0" stop-color="#9cc8e6"/><stop offset="1" stop-color="#3f88c0"/></linearGradient></defs><circle cx="6" cy="6" r="5.6" fill="url(#ig)"/><rect x="5.25" y="5" width="1.5" height="4.8" fill="#fff"/><rect x="5.25" y="2.3" width="1.5" height="1.6" fill="#fff"/></svg>
<div style="position:absolute;left:86.6px;top:362.10px;font-family:'Liberation Sans', sans-serif;font-size:11px;font-weight:normal;font-style:normal;color:#1e1e1e;white-space:pre;line-height:15px;letter-spacing:0.177px;">Gradle tasks [:app:assembleDebug]</div>
<svg style="position:absolute;left:55.3px;top:387.2px" width="9" height="8"><path d="M0.5 0.5 L8 0.5 L4.25 7 Z" fill="#a6a6a6"/></svg>
<svg style="position:absolute;left:71px;top:383px" width="10" height="13"><path d="M0.8 0.8 H7 L9.2 3 V12.2 H0.8 Z" fill="#ffffff" stroke="#8d8d8d" stroke-width="1.6"/><rect x="2.8" y="3" width="4.4" height="6.8" fill="#6aaae8"/><rect x="4.2" y="5.5" width="1.3" height="4" fill="#3a4a60"/></svg>
<div style="position:absolute;left:87.2px;top:376.80px;font-family:'Liberation Sans', sans-serif;font-size:11px;font-weight:normal;font-style:normal;color:#1e1e1e;white-space:pre;line-height:15px;letter-spacing:0.555px;">/Users/faryalfarooq/AndroidStudioProjects/iSearch/app/src/main/java/com/fa</div>
<div style="position:absolute;left:87.0px;top:390.00px;font-family:'Liberation Sans', sans-serif;font-size:11px;font-weight:normal;font-style:normal;color:#1e1e1e;white-space:pre;line-height:15px;letter-spacing:0.453px;">ryalfarooq/isearch/MainActivity.java</div>
<svg style="position:absolute;left:86.5px;top:405.4px" width="12" height="12"><defs><linearGradient id="eg" x1="0" y1="0" x2="0" y2="1"><stop offset="0" stop-color="#f39c92"/><stop offset="1" stop-color="#d4453e"/></linearGradient></defs><circle cx="6" cy="6" r="5.8" fill="url(#eg)"/><rect x="5.25" y="2.4" width="1.5" height="4.6" fill="#fff"/><rect x="5.25" y="8.1" width="1.5" height="1.5" fill="#fff"/></svg>
<div style="position:absolute;left:102.7px;top:404.60px;font-family:'Liberation Sans', sans-serif;font-size:11px;font-weight:normal;font-style:normal;color:#1e1e1e;white-space:pre;line-height:15px;letter-spacing:0.318px;">error: cannot find symbol class Menu</div>
<svg style="position:absolute;left:86.5px;top:420px" width="12" height="12"><defs><linearGradient id="eg" x1="0" y1="0" x2="0" y2="1"><stop offset="0" stop-color="#f39c92"/><stop offset="1" stop-color="#d4453e"/></linearGradient></defs><circle cx="6" cy="6" r="5.8" fill="url(#eg)"/><rect x="5.25" y="2.4" width="1.5" height="4.6" fill="#fff"/><rect x="5.25" y="8.1" width="1.5" height="1.5" fill="#fff"/></svg>
<div style="position:absolute;left:102.7px;top:419.20px;font-family:'Liberation Sans', sans-serif;font-size:11px;font-weight:normal;font-style:normal;color:#1e1e1e;white-space:pre;line-height:15px;letter-spacing:0.339px;">error: cannot find symbol class MenuItem</div>
<svg style="position:absolute;left:86.5px;top:448.0px" width="12" height="12"><defs><linearGradient id="eg" x1="0" y1="0" x2="0" y2="1"><stop offset="0" stop-color="#f39c92"/><stop offset="1" stop-color="#d4453e"/></linearGradient></defs><circle cx="6" cy="6" r="5.8" fill="url(#eg)"/><rect x="5.25" y="2.4" width="1.5" height="4.6" fill="#fff"/><rect x="5.25" y="8.1" width="1.5" height="1.5" fill="#fff"/></svg>
<div style="position:absolute;left:102.7px;top:433.80px;font-family:'Liberation Sans', sans-serif;font-size:11px;font-weight:normal;font-style:normal;color:#1e1e1e;white-space:pre;line-height:15px;letter-spacing:0.393px;">error: &lt;anonymous com.faryalfarooq.isearch.MainActivity$1&gt; is not</div>
<div style="position:absolute;left:102.7px;top:447.50px;font-family:'Liberation Sans', sans-serif;font-size:11px;font-weight:normal;font-style:normal;color:#1e1e1e;white-space:pre;line-height:15px;letter-spacing:0.295px;">abstract and does not override abstract method onQueryTextSubmit(String)</div>
<div style="position:absolute;left:102.7px;top:460.50px;font-family:'Liberation Sans', sans-serif;font-size:11px;font-weight:normal;font-style:normal;color:#1e1e1e;white-space:pre;line-height:15px;letter-spacing:0.270px;">in OnQueryTextListener</div>
<svg style="position:absolute;left:86.5px;top:475.8px" width="12" height="12"><defs><linearGradient id="eg" x1="0" y1="0" x2="0" y2="1"><stop offset="0" stop-color="#f39c92"/><stop offset="1" stop-color="#d4453e"/></linearGradient></defs><circle cx="6" cy="6" r="5.8" fill="url(#eg)"/><rect x="5.25" y="2.4" width="1.5" height="4.6" fill="#fff"/><rect x="5.25" y="8.1" width="1.5" height="1.5" fill="#fff"/></svg>
<div style="position:absolute;left:102.7px;top:475.10px;font-family:'Liberation Sans', sans-serif;font-size:11px;font-weight:normal;font-style:normal;color:#1e1e1e;white-space:pre;line-height:15px;letter-spacing:0.332px;">error: method does not override or implement a method from a supertype</div>
<svg style="position:absolute;left:70.2px;top:497.2px" width="12" height="12"><defs><linearGradient id="eg" x1="0" y1="0" x2="0" y2="1"><stop offset="0" stop-color="#f39c92"/><stop offset="1" stop-color="#d4453e"/></linearGradient></defs><circle cx="6" cy="6" r="5.8" fill="url(#eg)"/><rect x="5.25" y="2.4" width="1.5" height="4.6" fill="#fff"/><rect x="5.25" y="8.1" width="1.5" height="1.5" fill="#fff"/></svg>
<div style="position:absolute;left:86.4px;top:489.70px;font-family:'Liberation Sans', sans-serif;font-size:11px;font-weight:normal;font-style:normal;color:#1e1e1e;white-space:pre;line-height:15px;letter-spacing:0.184px;">Execution failed for task &#x27;:app:compileDebugJavaWithJavac&#x27;.</div>
<div style="position:absolute;left:86.4px;top:502.80px;font-family:'Liberation Sans', sans-serif;font-size:11px;font-weight:normal;font-style:normal;color:#1e1e1e;white-space:pre;line-height:15px;letter-spacing:0.388px;">&gt; Compilation failed; see the compiler error output for details.</div>
<svg style="position:absolute;left:70px;top:518.8px" width="12" height="12"><defs><linearGradient id="ig" x1="0" y1="0" x2="0" y2="1"><stop offset="0" stop-color="#9cc8e6"/><stop offset="1" stop-color="#3f88c0"/></linearGradient></defs><circle cx="6" cy="6" r="5.6" fill="url(#ig)"/><rect x="5.25" y="5" width="1.5" height="4.8" fill="#fff"/><rect x="5.25" y="2.3" width="1.5" height="1.6" fill="#fff"/></svg>
<div style="position:absolute;left:86.9px;top:517.90px;font-family:'Liberation Sans', sans-serif;font-size:11px;font-weight:normal;font-style:normal;color:#1e1e1e;white-space:pre;line-height:15px;letter-spacing:-0.438px;">BUILD FAILED</div>
<svg style="position:absolute;left:70px;top:533.6px" width="12" height="12"><defs><linearGradient id="ig" x1="0" y1="0" x2="0" y2="1"><stop offset="0" stop-color="#9cc8e6"/><stop offset="1" stop-color="#3f88c0"/></linearGradient></defs><circle cx="6" cy="6" r="5.6" fill="url(#ig)"/><rect x="5.25" y="5" width="1.5" height="4.8" fill="#fff"/><rect x="5.25" y="2.3" width="1.5" height="1.6" fill="#fff"/></svg>
<div style="position:absolute;left:86.9px;top:532.80px;font-family:'Liberation Sans', sans-serif;font-size:11px;font-weight:normal;font-style:normal;color:#1e1e1e;white-space:pre;line-height:15px;letter-spacing:0.296px;">Total time: 3.973 secs</div>
<svg style="position:absolute;left:70px;top:548.3px" width="12" height="12"><defs><linearGradient id="ig" x1="0" y1="0" x2="0" y2="1"><stop offset="0" stop-color="#9cc8e6"/><stop offset="1" stop-color="#3f88c0"/></linearGradient></defs><circle cx="6" cy="6" r="5.6" fill="url(#ig)"/><rect x="5.25" y="5" width="1.5" height="4.8" fill="#fff"/><rect x="5.25" y="2.3" width="1.5" height="1.6" fill="#fff"/></svg>
<div style="position:absolute;left:86.9px;top:547.60px;font-family:'Liberation Sans', sans-serif;font-size:11px;font-weight:normal;font-style:normal;color:#1e1e1e;white-space:pre;line-height:15px;letter-spacing:0.199px;">5 errors</div>
<svg style="position:absolute;left:70px;top:563.0px" width="12" height="12"><defs><linearGradient id="ig" x1="0" y1="0" x2="0" y2="1"><stop offset="0" stop-color="#9cc8e6"/><stop offset="1" stop-color="#3f88c0"/></linearGradient></defs><circle cx="6" cy="6" r="5.6" fill="url(#ig)"/><rect x="5.25" y="5" width="1.5" height="4.8" fill="#fff"/><rect x="5.25" y="2.3" width="1.5" height="1.6" fill="#fff"/></svg>
<div style="position:absolute;left:86.9px;top:562.30px;font-family:'Liberation Sans', sans-serif;font-size:11px;font-weight:normal;font-style:normal;color:#1e1e1e;white-space:pre;line-height:15px;letter-spacing:0.180px;">3 warnings</div>
<div style="position:absolute;left:5px;top:566.8px;width:498px;height:1px;background:#c8c8c8;"></div>
<div style="position:absolute;left:5px;top:567.8px;width:498px;height:2px;background:#e6e6e6;"></div>
<div style="position:absolute;left:60px;top:567.5px;width:86px;height:2px;background:#b8b8b8;"></div>
<div style="position:absolute;left:509px;top:341px;width:511px;height:1px;background:#c8c8c8;"></div>
<div style="position:absolute;left:510px;top:342px;width:509px;height:17.5px;background:linear-gradient(#eaeaea,#dfdfdf);"></div>
<div style="position:absolute;left:509px;top:359px;width:511px;height:1px;background:#cdcdcd;"></div>
<div style="position:absolute;left:509px;top:341px;width:1px;height:226px;background:#d0d0d0;"></div>
<div style="position:absolute;left:514.5px;top:344.90px;font-family:'Liberation Sans', sans-serif;font-size:9.2px;font-weight:normal;font-style:normal;color:#555555;white-space:pre;line-height:13px;letter-spacing:0.225px;">Gradle Console</div>
<svg style="position:absolute;left:0;top:0;overflow:visible" width="1" height="1"><rect x="984.25" y="345.20" width="2.3" height="3" fill="#7b7b7b" transform="rotate(0 985.4 350.4)"/><rect x="984.25" y="345.20" width="2.3" height="3" fill="#7b7b7b" transform="rotate(45 985.4 350.4)"/><rect x="984.25" y="345.20" width="2.3" height="3" fill="#7b7b7b" transform="rotate(90 985.4 350.4)"/><rect x="984.25" y="345.20" width="2.3" height="3" fill="#7b7b7b" transform="rotate(135 985.4 350.4)"/><rect x="984.25" y="345.20" width="2.3" height="3" fill="#7b7b7b" transform="rotate(180 985.4 350.4)"/><rect x="984.25" y="345.20" width="2.3" height="3" fill="#7b7b7b" transform="rotate(225 985.4 350.4)"/><rect x="984.25" y="345.20" width="2.3" height="3" fill="#7b7b7b" transform="rotate(270 985.4 350.4)"/><rect x="984.25" y="345.20" width="2.3" height="3" fill="#7b7b7b" transform="rotate(315 985.4 350.4)"/><circle cx="985.4" cy="350.4" r="3.6" fill="#7b7b7b"/><circle cx="985.4" cy="350.4" r="1.2" fill="#e8e8e8"/><path d="M992.0 350.2 h4 l-2 2 z" fill="#7b7b7b"/></svg>
<svg style="position:absolute;left:1003.5px;top:345px" width="10" height="12"><path d="M4.5 0.8 V6.8" stroke="#7b7b7b" stroke-width="1"/><path d="M1.8 4.6 L4.5 7.3 L7.2 4.6" stroke="#7b7b7b" stroke-width="1.2" fill="none"/><rect x="0.3" y="8.2" width="9" height="3" fill="#7b7b7b"/><rect x="5.3" y="9" width="3" height="1.3" fill="#d8d8d8"/></svg>
<div style="position:absolute;left:510px;top:360px;width:24px;height:207px;background:#ececec;"></div>
<div style="position:absolute;left:534px;top:360px;width:1px;height:207px;background:#d6d6d6;"></div>
<div style="position:absolute;left:535px;top:360px;width:484px;height:207px;background:#ffffff;"></div>
<svg style="position:absolute;left:515px;top:364px" width="14" height="14"><rect x="0.8" y="1" width="8" height="1.1" fill="#777"/><rect x="4" y="6.4" width="4.5" height="1.1" fill="#777"/><rect x="0.8" y="11.6" width="8" height="1.1" fill="#777"/><path d="M9.5 1.2 Q12.3 1.6 12.2 3.6 Q12 5.6 9.6 6" stroke="#2f86c8" stroke-width="1.2" fill="none"/><path d="M10 4.4 L8 6 L10 7.6 Z" fill="#2f86c8"/><path d="M3.4 3.6 Q0.6 4.2 0.8 6.4 Q1 8.4 3.2 8.6" stroke="#2f86c8" stroke-width="1.2" fill="none"/><path d="M2.8 7 L4.8 8.6 L2.8 10.2 Z" fill="#2f86c8"/><path d="M9.5 7.4 Q12.3 7.8 12.2 9.8 Q12 11.8 9.6 12.2" stroke="#2f86c8" stroke-width="1.2" fill="none"/><path d="M10 10.6 L8 12.2 L10 13.8 Z" fill="#2f86c8"/></svg>
<div style="position:absolute;left:513px;top:383px;width:18.5px;height:18.5px;background:#d9d9d9;border-radius:3px"></div>
<svg style="position:absolute;left:516px;top:386px" width="13" height="12"><rect x="0.6" y="1.6" width="11" height="9.5" fill="#cfcfcf" stroke="#858585" stroke-width="1.2"/><rect x="0.6" y="1.6" width="11" height="1.4" fill="#858585"/><path d="M8.5 0 V7" stroke="#a35fc8" stroke-width="2"/><path d="M5.5 5.5 L8.5 9 L11.5 5.5 Z" fill="#a35fc8"/></svg>
<div style="position:absolute;left:544.1px;top:358.60px;font-family:'Liberation Mono', monospace;font-size:10px;font-weight:normal;font-style:normal;color:#8e1717;white-space:pre;line-height:14px;letter-spacing:-0.280px;">4 errors</div>
<div style="position:absolute;left:544.1px;top:383.25px;font-family:'Liberation Mono', monospace;font-size:10px;font-weight:normal;font-style:normal;color:#1a1a1a;white-space:pre;line-height:14px;letter-spacing:-0.280px;">:app:compileDebugJavaWithJavac FAILED</div>
<div style="position:absolute;left:544.1px;top:395.58px;font-family:'Liberation Mono', monospace;font-size:10px;font-weight:normal;font-style:normal;color:#1a1a1a;white-space:pre;line-height:14px;letter-spacing:-0.280px;">:app:buildInfoGeneratorDebug</div>
<div style="position:absolute;left:544.1px;top:420.23px;font-family:'Liberation Mono', monospace;font-size:10px;font-weight:normal;font-style:normal;color:#8e1717;white-space:pre;line-height:14px;letter-spacing:-0.280px;">FAILURE: Build failed with an exception.</div>
<div style="position:absolute;left:544.1px;top:444.88px;font-family:'Liberation Mono', monospace;font-size:10px;font-weight:normal;font-style:normal;color:#8e1717;white-space:pre;line-height:14px;letter-spacing:-0.280px;"><span style="position:relative;top:2px">*</span> What went wrong:</div>
<div style="position:absolute;left:544.1px;top:457.20px;font-family:'Liberation Mono', monospace;font-size:10px;font-weight:normal;font-style:normal;color:#8e1717;white-space:pre;line-height:14px;letter-spacing:-0.280px;">Execution failed for task &#x27;:app:compileDebugJavaWithJavac&#x27;.</div>
<div style="position:absolute;left:544.1px;top:469.53px;font-family:'Liberation Mono', monospace;font-size:10px;font-weight:normal;font-style:normal;color:#8e1717;white-space:pre;line-height:14px;letter-spacing:-0.280px;">&gt; Compilation failed; see the compiler error output for details.</div>
<div style="position:absolute;left:544.1px;top:494.18px;font-family:'Liberation Mono', monospace;font-size:10px;font-weight:normal;font-style:normal;color:#8e1717;white-space:pre;line-height:14px;letter-spacing:-0.280px;"><span style="position:relative;top:2px">*</span> Try:</div>
<div style="position:absolute;left:544.1px;top:506.50px;font-family:'Liberation Mono', monospace;font-size:10px;font-weight:normal;font-style:normal;color:#8e1717;white-space:pre;line-height:14px;letter-spacing:-0.280px;"><span style="color:#2a2ad8;text-decoration:underline">Run with --stacktrace</span> option to get the stack trace. <span style="color:#2a2ad8;text-decoration:underline">Run with --info</span> or <span style="color:#2a2ad8;text-decoration:underline">--debug option</span></div>
<div style="position:absolute;left:544.1px;top:531.15px;font-family:'Liberation Mono', monospace;font-size:10px;font-weight:normal;font-style:normal;color:#1a1a1a;white-space:pre;line-height:14px;letter-spacing:-0.280px;">BUILD FAILED</div>
<div style="position:absolute;left:544.1px;top:555.80px;font-family:'Liberation Mono', monospace;font-size:10px;font-weight:normal;font-style:normal;color:#1a1a1a;white-space:pre;line-height:14px;letter-spacing:-0.280px;">Total time: 3.973 secs</div>
<div style="position:absolute;left:1019px;top:341px;width:1px;height:228px;background:#c2c2c2;"></div>
<div style="position:absolute;left:1020px;top:341px;width:4px;height:228px;background:#ececec;"></div>
<div style="position:absolute;left:503.5px;top:341px;width:5.5px;height:228px;background:#ececec;"></div>
<div style="position:absolute;left:509px;top:341px;width:1px;height:226px;background:#d0d0d0;"></div>
<div style="position:absolute;left:505.6px;top:447.2px;width:1.2px;height:1.2px;background:#a8a8a8;"></div>
<div style="position:absolute;left:505.6px;top:449.7px;width:1.2px;height:1.2px;background:#a8a8a8;"></div>
<div style="position:absolute;left:505.6px;top:452.2px;width:1.2px;height:1.2px;background:#a8a8a8;"></div>
<div style="position:absolute;left:505.6px;top:454.7px;width:1.2px;height:1.2px;background:#a8a8a8;"></div>
<div style="position:absolute;left:505.6px;top:457.2px;width:1.2px;height:1.2px;background:#a8a8a8;"></div>
<div style="position:absolute;left:1021px;top:404px;width:3px;height:3.5px;background:#7cc040;"></div>
<div style="position:absolute;left:1020px;top:499px;width:8px;height:10px;border:1.2px solid #9a9a9a;border-radius:50%"></div>
<div style="position:absolute;left:1021.5px;top:553px;width:2.5px;height:3px;background:#e0a040;"></div>
<div style="position:absolute;left:509px;top:566.8px;width:511px;height:1px;background:#c8c8c8;"></div>
<div style="position:absolute;left:509px;top:567.8px;width:511px;height:2px;background:#e6e6e6;"></div></body></html>
